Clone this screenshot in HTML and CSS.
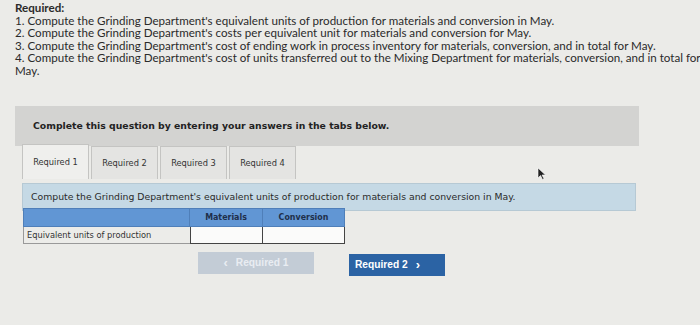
FILE: index.html
```html
<!DOCTYPE html>
<html>
<head>
<meta charset="utf-8">
<link rel="stylesheet" href="styles.css">
</head>
<body>
<div class="page">
  <div class="required">
    <div class="req-title">Required:</div>
    <div>1. Compute the Grinding Department's equivalent units of production for materials and conversion in May.</div>
    <div>2. Compute the Grinding Department's costs per equivalent unit for materials and conversion for May.</div>
    <div>3. Compute the Grinding Department's cost of ending work in process inventory for materials, conversion, and in total for May.</div>
    <div>4. Compute the Grinding Department's cost of units transferred out to the Mixing Department for materials, conversion, and in total for May.</div>
  </div>

  <div class="banner">Complete this question by entering your answers in the tabs below.</div>

  <div class="tabs">
    <div class="tab active">Required 1</div>
    <div class="tab">Required 2</div>
    <div class="tab">Required 3</div>
    <div class="tab">Required 4</div>
  </div>

  <div class="instr">Compute the Grinding Department's equivalent units of production for materials and conversion in May.</div>

  <div class="grid">
    <div class="h h-label"></div>
    <div class="h">Materials</div>
    <div class="h">Conversion</div>
    <div class="c c-label">Equivalent units of production</div>
    <div class="c c-input"></div>
    <div class="c c-input"></div>
  </div>

  <div class="nav">
    <div class="btn prev"><span class="chev">&lsaquo;</span> Required 1</div>
    <div class="btn next">Required 2 <span class="chev">&rsaquo;</span></div>
  </div>

  <svg class="cursor" width="10" height="14" viewBox="0 0 10 14"><path d="M1 1 L1 11 L3.5 8.5 L5.5 12.5 L7 11.8 L5 8 L8.5 8 Z" fill="#222" stroke="#fff" stroke-width="0.6"/></svg>
</div>
</body>
</html>
```
FILE: styles.css
```css
html, body {
  margin: 0;
  padding: 0;
}
body {
  background: #ebebe8;
  width: 700px;
  height: 325px;
  overflow: hidden;
}
.page {
  position: relative;
  height: 325px;
  overflow: hidden;
}
.required {
  font-family: Lato, "Open Sans", sans-serif;
  font-size: 11.6px;
  line-height: 12.6px;
  color: #2a2a2a;
  padding: 2px 0 0 15px;
  margin-right: -14px;
}
.req-title {
  font-weight: bold;
}
.banner {
  margin: 28px 0 0 15px;
  width: 606px;
  height: 40px;
  padding-left: 18px;
  background: #d3d3d1;
  display: flex;
  align-items: center;
  font-family: "DejaVu Sans", Verdana, sans-serif;
  font-weight: bold;
  font-size: 9.3px;
  color: #222;
}
.tabs {
  display: flex;
  gap: 2px;
  margin: -2px 0 0 22px;
  height: 35px;
  align-items: flex-end;
}
.tab {
  width: 67px;
  height: 33px;
  box-sizing: border-box;
  border: 1px solid #c4c4c2;
  border-bottom: none;
  background: #e4e4e2;
  display: flex;
  align-items: center;
  justify-content: center;
  font-family: "DejaVu Sans Condensed", "DejaVu Sans", sans-serif;
  font-size: 9.2px;
  color: #333;
}
.tab.active {
  background: #efefed;
  height: 35px;
}
.instr {
  margin: 4px 0 0 22px;
  width: 604px;
  height: 26px;
  padding-left: 8px;
  background: #c5d9e5;
  border: 1px solid #b6c9d4;
  display: flex;
  align-items: center;
  font-family: "DejaVu Sans", Verdana, sans-serif;
  font-size: 9.3px;
  color: #2a2a2a;
}
.grid {
  display: grid;
  grid-template-columns: 167px 73px 82px;
  grid-template-rows: 19px 17px;
  margin: -3px 0 0 23px;
  width: 322px;
  font-family: "DejaVu Sans Condensed", "DejaVu Sans", sans-serif;
  font-size: 8.8px;
}
.h {
  background: #6196d4;
  border: 1px solid #4f7fb9;
  border-left: none;
  display: flex;
  align-items: center;
  justify-content: center;
  font-weight: bold;
  color: #1f2f4a;
}
.h-label {
  border-left: 1px solid #4f7fb9;
}
.c {
  border-bottom: 1px solid #999;
  display: flex;
  align-items: center;
}
.c-label {
  border-left: 1px solid #999;
  padding-left: 3px;
  color: #333;
  background: #ecece9;
  font-size: 9.2px;
}
.c-input {
  background: #fbfbfa;
  border: 1.5px solid #444;
  border-top: none;
}
.c-input + .c-input {
  border-left: none;
}
.nav {
  display: flex;
  margin: 8px 0 0 198px;
  gap: 35px;
  align-items: flex-start;
}
.btn {
  height: 22px;
  display: flex;
  align-items: center;
  font-family: "Liberation Sans", Arial, sans-serif;
  font-weight: bold;
  font-size: 10.2px;
}
.prev {
  width: 116px;
  background: #c3ccd6;
  color: #e9edf2;
  justify-content: center;
}
.next {
  width: 90px;
  padding-left: 6px;
  margin-top: 2px;
  background: #2b63a4;
  color: #ffffff;
}
.chev {
  font-size: 13px;
  margin: 0 8px;
}
.prev .chev {
  margin-left: 0;
}
.cursor {
  position: absolute;
  left: 537px;
  top: 167px;
}
```
